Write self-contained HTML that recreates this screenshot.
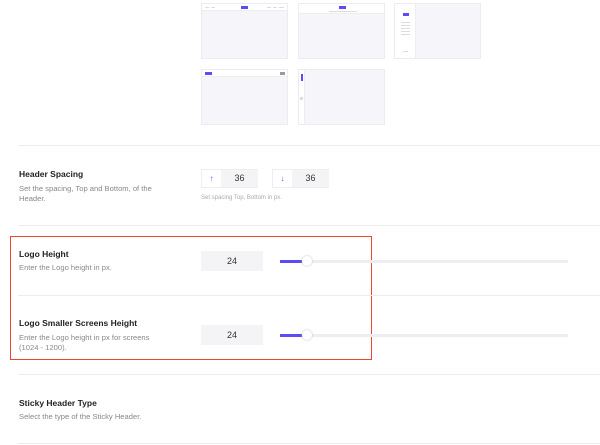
<!DOCTYPE html><html><head><style>
*{margin:0;padding:0;box-sizing:border-box}
body{width:600px;height:445px;background:#fff;position:relative;overflow:hidden;font-family:"Liberation Sans",sans-serif}
.a{position:absolute}
.th{position:absolute;border:1px solid #ebebf0;background:#f6f6fa;width:87px;height:56px}
.hr{position:absolute;left:18px;right:0;height:1px;background:#ececef}
.t{position:absolute;left:19px;font-size:8.5px;font-weight:bold;color:#222}
.d{position:absolute;left:19px;font-size:7.6px;color:#888;line-height:10px}
.box{position:absolute;background:#f4f4f7;font-size:9px;color:#333;text-align:center}
.p{background:#5b4cf5}
.g{background:#ddd}
.ar{position:absolute;left:0;top:0;width:19px;height:17px;color:#5b4cf5;font-size:8px;font-weight:bold;text-align:center;line-height:17px}
</style></head><body>
<div class="th" style="left:201px;top:3px"><div class="a" style="left:0;right:0;top:0;height:7px;background:#fff;border-bottom:1px solid #eee"></div><div class="a p" style="left:39px;top:2px;width:7px;height:3px"></div><div class="a g" style="left:3px;top:3px;width:4px;height:1px"></div><div class="a g" style="left:9px;top:3px;width:4px;height:1px"></div><div class="a g" style="left:65px;top:3px;width:4px;height:1px"></div><div class="a g" style="left:71px;top:3px;width:4px;height:1px"></div><div class="a g" style="left:77px;top:3px;width:5px;height:1px"></div></div>
<div class="th" style="left:298px;top:3px"><div class="a" style="left:0;right:0;top:0;height:10px;background:#fff;border-bottom:1px solid #eee"></div><div class="a p" style="left:40px;top:2px;width:7px;height:3px"></div><div class="a g" style="left:30px;top:7px;width:28px;height:1px"></div></div>
<div class="th" style="left:394px;top:3px"><div class="a" style="left:0;top:0;bottom:0;width:21px;background:#fff;border-right:1px solid #eee"></div><div class="a p" style="left:8px;top:9px;width:6px;height:3px"></div><div class="a g" style="left:6px;top:18px;width:9px;height:1px"></div><div class="a g" style="left:6px;top:21px;width:9px;height:1px"></div><div class="a g" style="left:6px;top:24px;width:9px;height:1px"></div><div class="a g" style="left:6px;top:27px;width:9px;height:1px"></div><div class="a g" style="left:6px;top:30px;width:9px;height:1px"></div><div class="a g" style="left:8px;top:47px;width:5px;height:1px"></div></div>
<div class="th" style="left:201px;top:69px"><div class="a" style="left:0;right:0;top:0;height:7px;background:#fff;border-bottom:1px solid #eee"></div><div class="a p" style="left:3px;top:2px;width:7px;height:3px"></div><div class="a" style="left:78px;top:2px;width:5px;height:3px;background:#999"></div></div>
<div class="th" style="left:298px;top:69px"><div class="a" style="left:0;top:0;bottom:0;width:6px;background:#fff;border-right:1px solid #eee"></div><div class="a p" style="left:2px;top:4px;width:2px;height:7px"></div><div class="a g" style="left:1px;top:27px;width:3px;height:3px"></div></div>
<div class="hr" style="top:145px"></div>
<div class="t" style="top:169px">Header Spacing</div>
<div class="d" style="top:184px;width:148px">Set the spacing, Top and Bottom, of the Header.</div>
<div class="a" style="left:201px;top:169px;width:57px;height:19px;border:1px solid #eee;background:#fff"><div class="ar">&#8593;</div><div class="box" style="left:19px;top:0;width:37px;height:17px;line-height:17px">36</div></div>
<div class="a" style="left:272px;top:169px;width:57px;height:19px;border:1px solid #eee;background:#fff"><div class="ar">&#8595;</div><div class="box" style="left:19px;top:0;width:37px;height:17px;line-height:17px">36</div></div>
<div class="a" style="left:201px;top:195px;font-size:6px;color:#aaa">Set spacing Top, Bottom in px.</div>
<div class="hr" style="top:225px"></div>
<div class="a" style="left:10px;top:236px;width:362px;height:124px;border:1.5px solid #e9452f"></div>
<div class="t" style="top:249px">Logo Height</div>
<div class="d" style="top:263px">Enter the Logo height in px.</div>
<div class="box" style="left:201px;top:251px;width:62px;height:20px;line-height:20px">24</div>
<div class="a" style="left:280px;top:260px;width:288px;height:3px;background:#ededf2"></div>
<div class="a p" style="left:280px;top:260px;width:26px;height:3px"></div>
<div class="a" style="left:302px;top:256px;width:10px;height:10px;border-radius:50%;background:#fff;box-shadow:0 0 2px #bbb"></div>
<div class="hr" style="top:295px"></div>
<div class="t" style="top:318px">Logo Smaller Screens Height</div>
<div class="d" style="top:333px">Enter the Logo height in px for screens<br>(1024 - 1200).</div>
<div class="box" style="left:201px;top:325px;width:62px;height:20px;line-height:20px">24</div>
<div class="a" style="left:280px;top:334px;width:288px;height:3px;background:#ededf2"></div>
<div class="a p" style="left:280px;top:334px;width:26px;height:3px"></div>
<div class="a" style="left:302px;top:330px;width:10px;height:10px;border-radius:50%;background:#fff;box-shadow:0 0 2px #bbb"></div>
<div class="hr" style="top:374px"></div>
<div class="t" style="top:398px">Sticky Header Type</div>
<div class="d" style="top:412px">Select the type of the Sticky Header.</div>
<div class="hr" style="top:443px"></div>
</body></html>
